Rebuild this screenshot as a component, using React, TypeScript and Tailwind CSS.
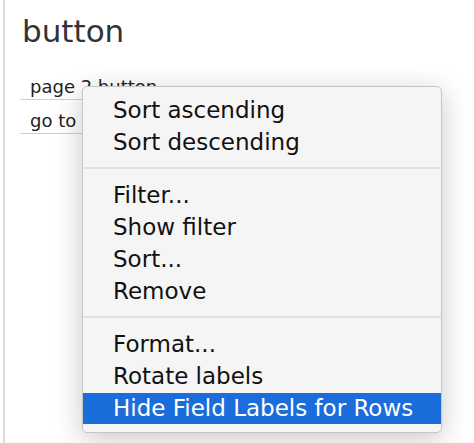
const groups: string[][] = [
  ["Sort ascending", "Sort descending"],
  ["Filter...", "Show filter", "Sort...", "Remove"],
  ["Format...", "Rotate labels", "Hide Field Labels for Rows"],
];

const active = "Hide Field Labels for Rows";

export default function App() {
  return (
    <div className="relative h-[443px] w-[474px] overflow-hidden bg-white pl-[3px] font-['DejaVu_Sans',sans-serif]">
      <div className="h-full border-l-2 border-[#dcdcdc] pl-[15px]">
        <h1 className="pl-[2px] pt-[13px] text-[31px] leading-[37px] text-[#333]">button</h1>

        {/* table rows behind the menu */}
        <div className="mt-[16px] w-[260px] text-[18px] text-[#222]">
          <div className="h-[34px] border-b border-[#cfcfcf] pl-[10px] pt-[10px] leading-[21px]">page 2 button</div>
          <div className="h-[34px] border-b border-[#cfcfcf] pl-[10px] pt-[10px] leading-[21px]">go to page 1</div>
        </div>
      </div>

      {/* context menu */}
      <div className="absolute left-[82px] top-[86px] w-[360px] rounded-[5px] border border-[#c6c6c6] bg-[#f5f5f5] py-[8px] text-[23px] leading-[31.7px] text-[#111] shadow-[0_6px_28px_rgba(0,0,0,0.22)]">
        {groups.map((items, gi) => (
          <div key={gi}>
            {gi > 0 && <div className="mb-[11px] mt-[9px] h-[2px] bg-[#e2e2e2]" />}
            {items.map((label) => (
              <div
                key={label}
                className={
                  label === active
                    ? "bg-[#1b6ddb] pl-[30px] text-white"
                    : "pl-[30px]"
                }
              >
                {label}
              </div>
            ))}
          </div>
        ))}
      </div>
    </div>
  );
}
